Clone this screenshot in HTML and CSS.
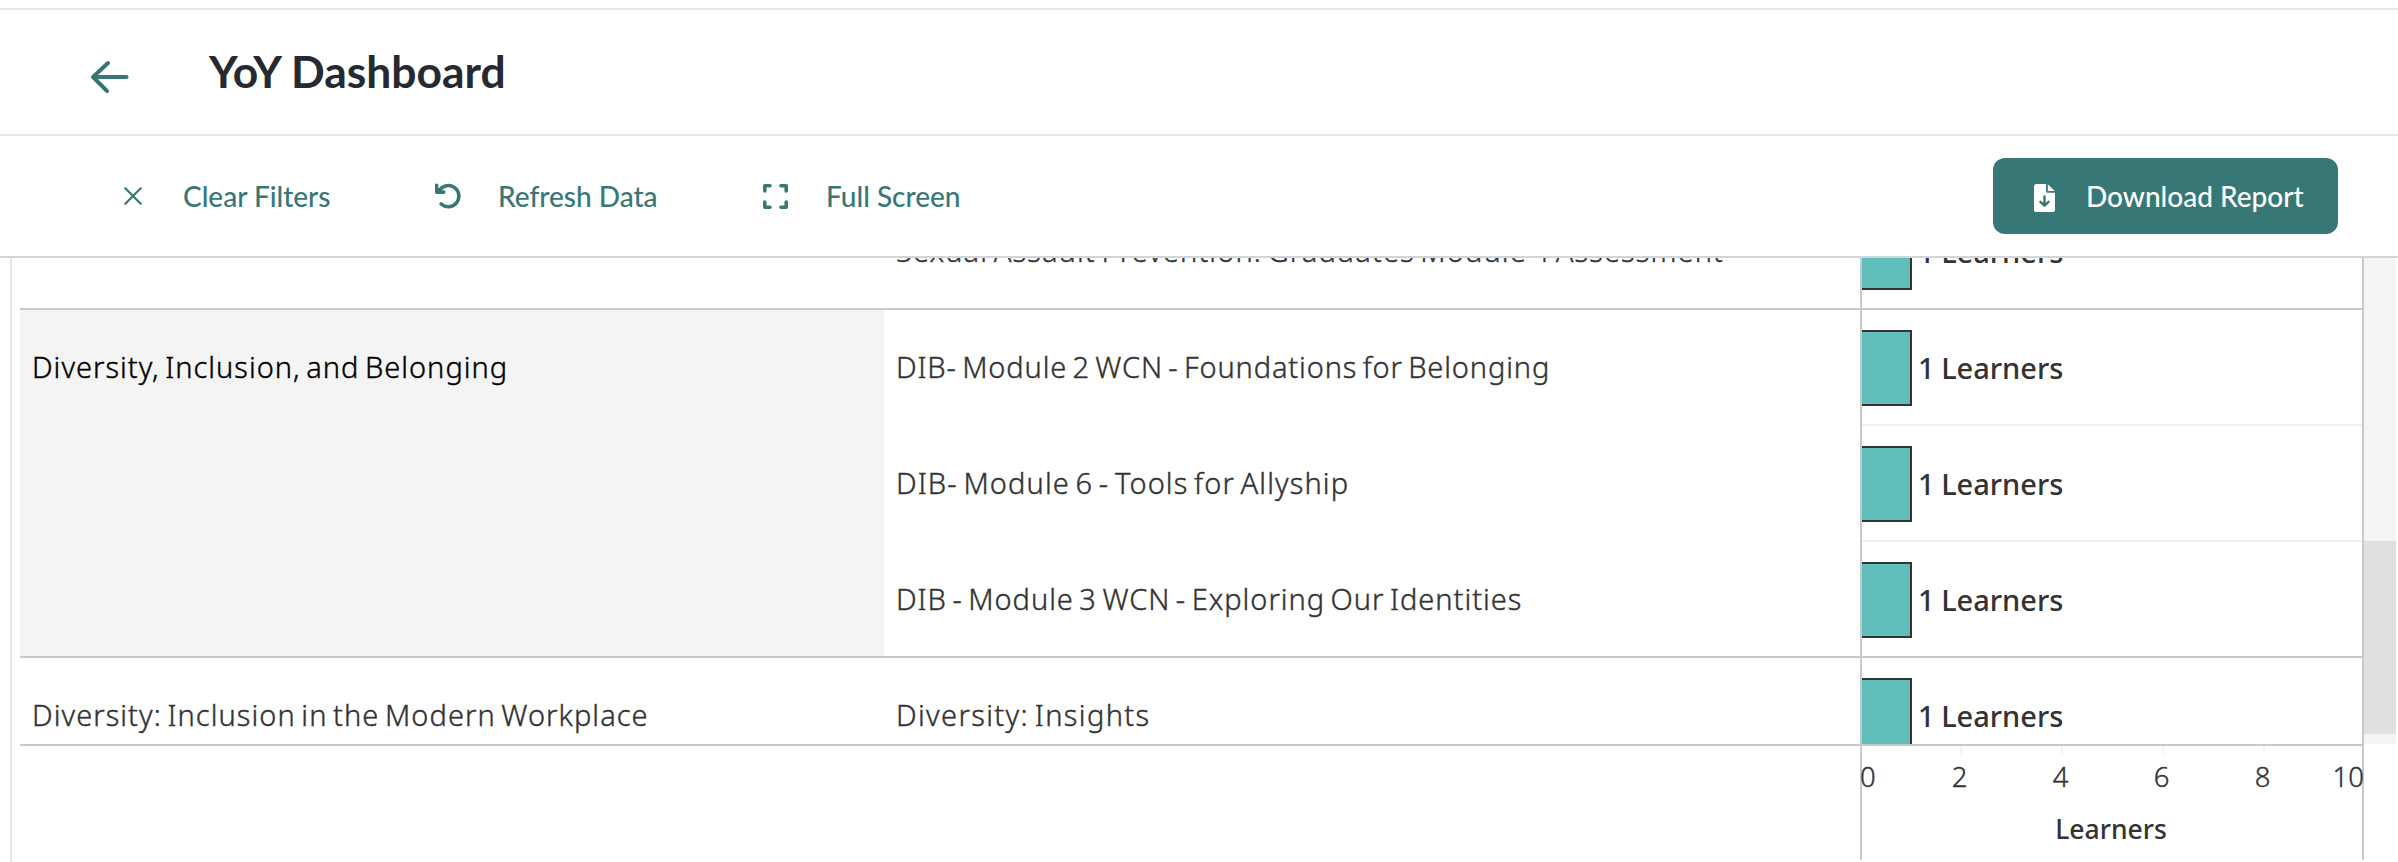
FILE: index.html
```html
<!DOCTYPE html>
<html lang="en">
<head>
  <meta charset="UTF-8">
  <meta name="viewport" content="width=device-width, initial-scale=1.0">
  <title>YoY Dashboard</title>
  <link rel="stylesheet" href="styles.css">
</head>
<body>
  <header class="header">
    <svg class="icon-back" viewBox="0 0 40 34" fill="none" stroke="currentColor" stroke-width="4" stroke-linecap="round" stroke-linejoin="round">
      <path d="M36.5 17H3M18 3L3 17L17 31"/>
    </svg>
    <h1>YoY Dashboard</h1>
  </header>

  <div class="toolbar">
    <button class="tool tool-clear">
      <svg class="icon-clear" viewBox="0 0 18 18" fill="none" stroke="currentColor" stroke-width="2.2" stroke-linecap="round">
        <path d="M1.3 1.3L16.7 16.7M16.7 1.3L1.3 16.7"/>
      </svg>
      <span>Clear Filters</span>
    </button>
    <button class="tool tool-refresh">
      <svg class="icon-refresh" viewBox="0 0 26 26" fill="none" stroke="currentColor" stroke-width="3.6" stroke-linecap="round" stroke-linejoin="round">
        <path d="M4.5 7.2A10.6 10.6 0 1 1 6.2 21"/>
        <path d="M1.6 2.2V9.1H8.8"/>
        <path d="M2 4L7 9H2Z" fill="currentColor" stroke-width="1"/>
      </svg>
      <span>Refresh Data</span>
    </button>
    <button class="tool tool-full">
      <svg class="icon-full" viewBox="0 0 25 25" fill="none" stroke="currentColor" stroke-width="3.6" stroke-linecap="round" stroke-linejoin="round">
        <path d="M1.8 7V1.8H7M18 1.8H23.2V7M23.2 18V23.2H18M7 23.2H1.8V18"/>
      </svg>
      <span>Full Screen</span>
    </button>
    <button class="btn-download">
      <svg class="icon-file" viewBox="0 0 21 28">
        <path fill="#fff" d="M2.6 0H12V7.2Q12 8.8 13.6 8.8H21V25.4Q21 28 18.4 28H2.6Q0 28 0 25.4V2.6Q0 0 2.6 0ZM13.8 0.2L20.8 7H13.8Z"/>
        <path fill="none" stroke="#377876" stroke-width="2.4" stroke-linecap="round" stroke-linejoin="round" d="M10.5 12.5V21.5M6.4 17.8L10.5 21.7L14.6 17.8"/>
      </svg>
      <span>Download Report</span>
    </button>
  </div>

  <main class="report">
    <div class="table">
      <div class="rows">
        <div class="group">
          <div class="category"></div>
          <div class="modules">
            <div class="module wide">Sexual Assault Prevention: Graduates Module 4 Assessment</div>
          </div>
          <div class="bars">
            <div class="bar-row"><div class="bar"></div><span>1 Learners</span></div>
          </div>
        </div>
        <div class="group">
          <div class="category selected">Diversity, Inclusion, and Belonging</div>
          <div class="modules">
            <div class="module narrow">DIB- Module 2 WCN - Foundations for Belonging</div>
            <div class="module wide">DIB- Module 6 - Tools for Allyship</div>
            <div class="module">DIB - Module 3 WCN - Exploring Our Identities</div>
          </div>
          <div class="bars">
            <div class="bar-row"><div class="bar"></div><span>1 Learners</span></div>
            <div class="bar-row"><div class="bar"></div><span>1 Learners</span></div>
            <div class="bar-row"><div class="bar"></div><span>1 Learners</span></div>
          </div>
        </div>
        <div class="group">
          <div class="category">Diversity: Inclusion in the Modern Workplace</div>
          <div class="modules">
            <div class="module wider">Diversity: Insights</div>
          </div>
          <div class="bars">
            <div class="bar-row"><div class="bar"></div><span>1 Learners</span></div>
          </div>
        </div>
      </div>
      <div class="axis">
        <div class="axis-scale">
          <div class="ticks"><i></i><i></i><i></i><i></i></div>
          <div class="tick-labels">
            <span>0</span><span>2</span><span>4</span><span>6</span><span>8</span><span>10</span>
          </div>
          <div class="axis-title">Learners</div>
        </div>
      </div>
    </div>
    <div class="scrollbar"><div class="thumb"></div></div>
  </main>
</body>
</html>
```

FILE: styles.css
```css
:root {
  --primary: #377876;
  --bar: #5ebfba;
  --text: #333;
  --line: #c9c9c9;
  --muted: #f4f4f4;
}

* {
  box-sizing: border-box;
  margin: 0;
  padding: 0;
}

body {
  height: 862px;
  padding-top: 8px;
  overflow: hidden;
  background: #fff;
  color: var(--text);
  font-family: 'Noto Sans', sans-serif;
}

svg {
  display: block;
  flex: none;
}

.header {
  display: flex;
  height: 128px;
  padding-left: 90px;
  border-top: 2px solid #e4e7ea;
  border-bottom: 2px solid #e4e7ea;
  color: var(--primary);
}

.icon-back {
  width: 40px;
  height: 34px;
  margin-top: 50px;
}

.header h1 {
  margin: 33px 0 0 79px;
  color: #262a30;
  font: bold 44.4px/56px Lato, sans-serif;
}

.toolbar {
  display: flex;
  align-items: center;
  height: 122px;
  padding: 0 60px 0 124px;
  border-bottom: 2px solid #d0d5da;
}

.tool,
.btn-download {
  display: flex;
  align-items: center;
  border: none;
  background: none;
  color: var(--primary);
  font: 500 28px/40px Lato, sans-serif;
  white-space: nowrap;
}

.tool-clear {
  width: 311px;
  gap: 41px;
}

.tool-refresh {
  width: 328px;
  gap: 37px;
}

.tool-full {
  gap: 38px;
}

.icon-clear {
  width: 18px;
  height: 18px;
}

.icon-refresh {
  width: 26px;
  height: 26px;
}

.icon-full {
  width: 25px;
  height: 25px;
}

.btn-download {
  width: 345px;
  height: 76px;
  margin-left: auto;
  padding-left: 41px;
  gap: 31px;
  border-radius: 12px;
  background: var(--primary);
  color: #fff;
}

.icon-file {
  width: 21px;
  height: 28px;
  margin-top: 4px;
}

.report {
  display: flex;
  height: 604px;
  margin-left: 10px;
  padding-left: 8px;
  border-left: 2px solid #e6e6e6;
}

.table {
  width: 2344px;
}

/* The list is scrolled: the first row is partly under the toolbar */
.rows {
  height: 488px;
  overflow: hidden;
  border-bottom: 2px solid var(--line);
}

.group {
  display: flex;
  border-bottom: 2px solid var(--line);
}

.group:first-child {
  margin-top: -64px;
}

.category,
.module {
  padding: 35px 0 0 12px;
  font-size: 29px;
  font-weight: 300;
  line-height: 44px;
  letter-spacing: 0.97px;
  word-spacing: -3px;
  white-space: nowrap;
  -webkit-text-stroke: 0.4px currentColor;
}

.module.narrow {
  letter-spacing: 0.86px;
}

.module.wide {
  letter-spacing: 1.11px;
}

.module.wider {
  letter-spacing: 1.36px;
}

.category {
  width: 864px;
  letter-spacing: 1.05px;
}

.category.selected {
  background: var(--muted);
  color: #000;
  letter-spacing: 1px;
}

.modules {
  width: 976px;
}

.module {
  height: 116px;
}

.module:last-child {
  height: 114px;
}

.bars {
  width: 504px;
  border-left: 2px solid var(--line);
  border-right: 2px solid var(--line);
}

.bar-row {
  display: flex;
  align-items: flex-start;
  height: 116px;
  padding-top: 20px;
  border-bottom: 2px solid #f0f0f0;
  font-size: 29px;
  font-weight: 500;
  line-height: 44px;
  word-spacing: -1px;
}

.bar-row:last-child {
  height: 114px;
  border-bottom: none;
}

.bar-row span {
  margin: 16px 0 0 6px;
}

.bar {
  width: 50px;
  height: 76px;
  border: 2px solid #333;
  border-left: none;
  background: var(--bar);
}

.axis {
  display: flex;
  justify-content: flex-end;
}

.axis-scale {
  width: 504px;
  height: 114px;
  border-left: 2px solid var(--line);
  border-right: 2px solid var(--line);
}

.ticks {
  display: flex;
  justify-content: space-between;
  height: 8px;
  padding: 0 97px 0 98px;
}

.ticks i {
  width: 2px;
  background: var(--muted);
}

.tick-labels {
  display: flex;
  margin: 3px -2px 0 -2px;
  font-size: 27.5px;
  font-weight: 300;
  line-height: 40px;
  -webkit-text-stroke: 0.4px currentColor;
}

.tick-labels span {
  width: 101px;
  text-align: center;
}

.tick-labels span:first-child {
  width: 49px;
  text-align: left;
}

.tick-labels span:last-child {
  flex: 1;
  text-align: right;
}

.axis-title {
  margin: 12px 2px 0 0;
  font-size: 26.5px;
  font-weight: 500;
  line-height: 40px;
  text-align: center;
}

.scrollbar {
  width: 32px;
  height: 486px;
  padding-top: 283px;
  background: var(--muted);
}

.thumb {
  height: 193px;
  background: #e0e0e0;
}
```
